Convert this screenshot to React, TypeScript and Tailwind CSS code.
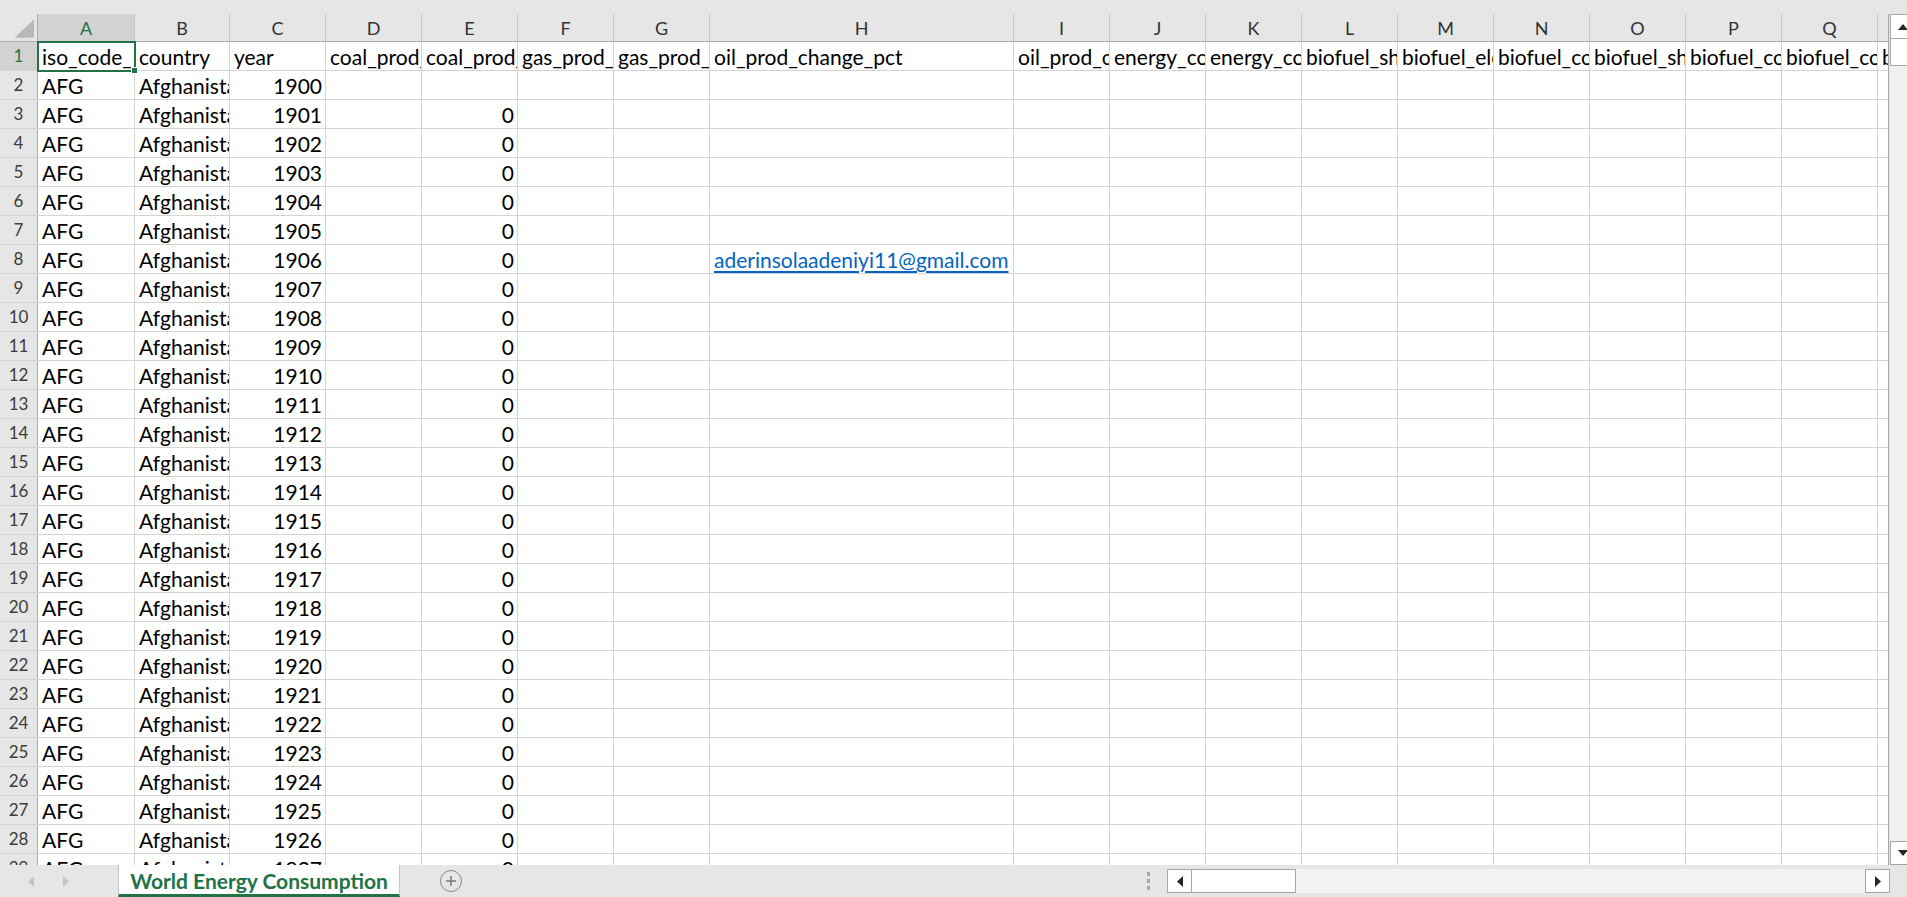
import React from "react";

const EMAIL = "aderinsolaadeniyi11@gmail.com";

const cols = [
  { l: "A", w: "w-[97px]", h: "iso_code_" },
  { l: "B", w: "w-[95px]", h: "country" },
  { l: "C", w: "w-[96px]", h: "year" },
  { l: "D", w: "w-[96px]", h: "coal_prod_change_pct" },
  { l: "E", w: "w-[96px]", h: "coal_prod_change_twh" },
  { l: "F", w: "w-[96px]", h: "gas_prod_change_pct" },
  { l: "G", w: "w-[96px]", h: "gas_prod_change_twh" },
  { l: "H", w: "w-[304px]", h: "oil_prod_change_pct" },
  { l: "I", w: "w-[96px]", h: "oil_prod_change_twh" },
  { l: "J", w: "w-[96px]", h: "energy_cons_change_pct" },
  { l: "K", w: "w-[96px]", h: "energy_cons_change_twh" },
  { l: "L", w: "w-[96px]", h: "biofuel_share_elec" },
  { l: "M", w: "w-[96px]", h: "biofuel_elec_per_capita" },
  { l: "N", w: "w-[96px]", h: "biofuel_cons_change_pct" },
  { l: "O", w: "w-[96px]", h: "biofuel_share_energy" },
  { l: "P", w: "w-[96px]", h: "biofuel_cons_change_twh" },
  { l: "Q", w: "w-[96px]", h: "biofuel_consumption" },
  { l: "R", w: "w-[96px]", h: "biofuel_cons_per_capita" },
];

// rows 2..29, Afghanistan from 1900
const rows = Array.from({ length: 28 }, (_, i) => i + 2);

function cellValue(row: number, col: string) {
  if (col === "A") return { v: "AFG", right: false };
  if (col === "B") return { v: "Afghanistan", right: false };
  if (col === "C") return { v: String(1898 + row), right: true };
  if (col === "E" && row >= 3) return { v: "0", right: true };
  return null;
}

function Cell({ w, children, right }: { w: string; children?: React.ReactNode; right?: boolean }) {
  return (
    <div
      className={`${w} shrink-0 h-full border-r border-[#d4d4d4] overflow-hidden whitespace-nowrap flex items-end pb-[1px] leading-[25px] ${
        right ? "justify-end pr-[3px]" : "pl-[4px]"
      }`}
    >
      {children}
    </div>
  );
}

function RowHead({ n, selected }: { n: number; selected?: boolean }) {
  return (
    <div
      className={`w-[38px] shrink-0 h-full border-r border-[#ababab] flex items-end justify-center pb-[3px] leading-[22px] text-[17px] ${
        selected ? "bg-[#d2d2d2] text-[#217346]" : "bg-[#e6e6e6] text-[#3c3c3c]"
      }`}
    >
      {n}
    </div>
  );
}

function Tri({ dir, className }: { dir: "up" | "down" | "left" | "right"; className?: string }) {
  const pts = {
    up: "0,6 5,0 10,6",
    down: "0,0 10,0 5,6",
    left: "6,0 6,11 0,5.5",
    right: "0,0 6,5.5 0,11",
  }[dir];
  const vb = dir === "up" || dir === "down" ? "0 0 10 6" : "0 0 6 11";
  const size = dir === "up" || dir === "down" ? "w-[10px] h-[6px]" : "w-[6px] h-[11px]";
  return (
    <svg viewBox={vb} className={`${size} ${className ?? ""}`}>
      <polygon points={pts} fill="currentColor" />
    </svg>
  );
}

export default function App() {
  return (
    <div className="w-[1907px] h-[897px] overflow-hidden bg-[#e6e6e6] flex flex-col font-['Lato',sans-serif] text-black select-none">
      <div className="h-[14px] shrink-0" />

      {/* sheet area + vertical scrollbar */}
      <div className="flex h-[851px] shrink-0">
        <div className="w-[1889px] shrink-0 h-full overflow-hidden bg-white border-r border-[#a6a6a6]">
          {/* column headers */}
          <div className="flex h-[28px] bg-[#e6e6e6] border-b border-[#ababab] w-max">
            <div className="w-[38px] shrink-0 h-full border-r border-[#ababab] flex items-end justify-end">
              <svg viewBox="0 0 38 27" className="w-[38px] h-[27px]">
                <polygon points="35,5 35,24 15,24" fill="#b8b8b8" />
              </svg>
            </div>
            {cols.map((c) => (
              <div
                key={c.l}
                className={`${c.w} shrink-0 h-full border-r border-[#c8c8c8] flex items-end justify-center pb-[2px] leading-[22px] text-[18px] ${
                  c.l === "A" ? "bg-[#d2d2d2] text-[#217346]" : "text-[#333333]"
                }`}
              >
                {c.l}
              </div>
            ))}
          </div>

          {/* row 1: field names */}
          <div className="relative flex h-[29px] border-b border-[#d4d4d4] w-max text-[21px]">
            <RowHead n={1} selected />
            {cols.map((c) => (
              <Cell key={c.l} w={c.w}>
                <span>{c.h}</span>
              </Cell>
            ))}
            {/* active cell A1 */}
            <div className="absolute left-[37px] top-[-1px] w-[99px] h-[31px] border-2 border-[#217346] z-10">
              <div className="absolute right-[-4px] bottom-[-4px] w-[7px] h-[7px] bg-[#217346] border border-white" />
            </div>
          </div>

          {rows.map((r) => (
            <div key={r} className="flex h-[29px] border-b border-[#d4d4d4] w-max text-[21px]">
              <RowHead n={r} />
              {cols.map((c) => {
                if (c.l === "H" && r === 8) {
                  return (
                    <Cell key={c.l} w={c.w}>
                      <span className="text-[#0563c1] underline underline-offset-[3px]">{EMAIL}</span>
                    </Cell>
                  );
                }
                const val = cellValue(r, c.l);
                return (
                  <Cell key={c.l} w={c.w} right={val?.right}>
                    {val && <span>{val.v}</span>}
                  </Cell>
                );
              })}
            </div>
          ))}
        </div>

        {/* vertical scrollbar */}
        <div className="ml-[1px] w-[25px] shrink-0 h-full flex flex-col bg-[#f0f0f0]">
          <div className="h-[25px] shrink-0 bg-white border border-[#a6a6a6] flex items-center justify-center text-[#262626]">
            <Tri dir="up" />
          </div>
          <div className="h-[27px] shrink-0 bg-white border border-t-0 border-[#a6a6a6]" />
          <div className="flex-1" />
          <div className="h-[24px] shrink-0 bg-white border border-[#a6a6a6] flex items-center justify-center text-[#262626]">
            <Tri dir="down" />
          </div>
        </div>
      </div>

      {/* sheet tabs bar */}
      <div className="flex h-[32px] shrink-0 items-stretch bg-[#e6e6e6]">
        <div className="w-[118px] shrink-0 flex items-center pl-[28px] gap-[29px] text-[#c4c4c4]">
          <Tri dir="left" />
          <Tri dir="right" />
        </div>
        <div className="w-[282px] shrink-0 bg-white border-x border-[#c6c6c6] border-b-[3px] border-b-[#217346] flex items-center justify-center pt-[1px]">
          <span className="font-bold text-[21px] text-[#217346] leading-none">World Energy Consumption</span>
        </div>
        <div className="ml-[40px] flex items-center">
          <div className="w-[22px] h-[22px] rounded-full border-[1.5px] border-[#8a8a8a] flex items-center justify-center">
            <svg viewBox="0 0 12 12" className="w-[12px] h-[12px]">
              <path d="M6 1v10M1 6h10" stroke="#7a7a7a" strokeWidth="1.5" />
            </svg>
          </div>
        </div>

        <div className="ml-auto flex items-center">
          <div className="flex flex-col gap-[3px] mr-[17px]">
            <div className="w-[3px] h-[4px] bg-[#a8a8a8]" />
            <div className="w-[3px] h-[4px] bg-[#a8a8a8]" />
            <div className="w-[3px] h-[4px] bg-[#a8a8a8]" />
          </div>
          <div className="w-[723px] h-[24px] flex bg-[#f2f2f2]">
            <div className="w-[25px] shrink-0 h-full bg-white border border-[#a6a6a6] flex items-center justify-center text-[#262626]">
              <Tri dir="left" />
            </div>
            <div className="w-[104px] shrink-0 h-full bg-white border border-l-0 border-[#a6a6a6]" />
            <div className="flex-1" />
            <div className="w-[25px] shrink-0 h-full bg-white border border-[#a6a6a6] flex items-center justify-center text-[#262626]">
              <Tri dir="right" />
            </div>
          </div>
          <div className="w-[17px]" />
        </div>
      </div>
    </div>
  );
}
